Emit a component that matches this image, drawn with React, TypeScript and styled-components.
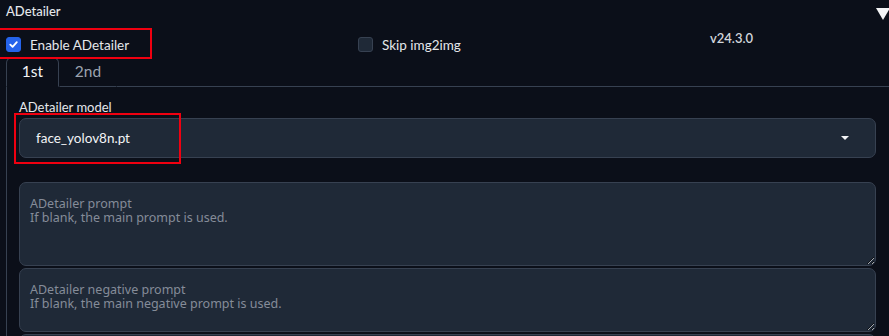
import React from "react";
import styled, { createGlobalStyle } from "styled-components";

const Global = createGlobalStyle`
  html, body { margin: 0; padding: 0; background: #0b0f19; }
  body { font-family: "Lato", "Noto Sans", sans-serif; color: #e5e7eb; overflow: hidden; }
  * { box-sizing: border-box; }
`;

const Page = styled.div`
  width: 1100px;
  padding: 0 0 0 6px;
`;

const Header = styled.div`
  position: relative;
  height: 28px;
  display: flex;
  align-items: flex-start;
  padding-top: 3px;
  width: 883px;
`;

const Title = styled.span`
  font-size: 13px;
  color: #e5e7eb;
  font-weight: 500;
`;

const Caret = styled.span`
  position: absolute;
  right: -1px;
  top: 8px;
  width: 0;
  height: 0;
  border-left: 7px solid transparent;
  border-right: 7px solid transparent;
  border-top: 12px solid #f3f4f6;
`;

const OptionsRow = styled.div`
  display: grid;
  grid-template-columns: 340px 340px 340px;
  column-gap: 12px;
  height: 29px;
  align-items: start;
`;

const CheckLabel = styled.label<{ $outlined?: boolean }>`
  position: relative;
  display: flex;
  align-items: center;
  gap: 9px;
  height: 15px;
  margin-top: 9px;
  font-size: 13.5px;
  color: #e5e7eb;
  ${(p) =>
    p.$outlined &&
    `&::after {
      content: "";
      position: absolute;
      left: -8px;
      top: -9px;
      width: 150px;
      height: 27px;
      border: 2px solid #f00010;
    }`}
`;

const Box = styled.span<{ $checked?: boolean }>`
  width: 15px;
  height: 15px;
  border-radius: 3px;
  display: inline-flex;
  align-items: center;
  justify-content: center;
  background: ${(p) => (p.$checked ? "#2563eb" : "#1f2937")};
  border: 1px solid ${(p) => (p.$checked ? "#2563eb" : "#374151")};
`;

const Version = styled.div`
  font-size: 13px;
  font-weight: 600;
  color: #d1d5db;
  margin-top: 2px;
`;

const TabNav = styled.div`
  display: flex;
  height: 30px;
  width: 883px;
`;

const Tab = styled.div<{ $active?: boolean }>`
  width: ${(p) => (p.$active ? "53px" : "58px")};
  display: flex;
  align-items: center;
  justify-content: center;
  font-size: 15.5px;
  color: ${(p) => (p.$active ? "#f3f4f6" : "#9ca3af")};
  border: 1px solid ${(p) => (p.$active ? "#374151" : "transparent")};
  border-bottom: 1px solid ${(p) => (p.$active ? "transparent" : "#374151")};
  border-radius: 6px 6px 0 0;
  padding-bottom: 2px;
`;

const NavRest = styled.div`
  flex: 1;
  border-bottom: 1px solid #374151;
`;

const Panel = styled.div`
  border-left: 1px solid #374151;
  padding: 11px 0 0 12px;
  display: flex;
  flex-direction: column;
  width: 870px;
`;

const FieldLabel = styled.div`
  font-size: 13px;
  color: #e5e7eb;
  height: 20px;
  line-height: 18px;
`;

const SelectWrap = styled.div`
  position: relative;
  height: 40px;
  background: #1f2937;
  border: 1px solid #374151;
  border-radius: 7px;
  display: flex;
  align-items: center;
  padding: 0 16px;
  justify-content: space-between;
  &::after {
    content: "";
    position: absolute;
    left: -6px;
    top: -6px;
    width: 163px;
    height: 47px;
    border: 2px solid #f00010;
  }
`;

const SelectValue = styled.span`
  font-size: 13.5px;
  color: #f3f4f6;
`;

const SelectArrow = styled.span`
  width: 0;
  height: 0;
  border-left: 4px solid transparent;
  border-right: 4px solid transparent;
  border-top: 4px solid #f3f4f6;
  margin-right: 10px;
`;

const Prompts = styled.div`
  margin-top: 24px;
  display: flex;
  flex-direction: column;
  gap: 2px;
`;

const Area = styled.textarea<{ $h: number }>`
  height: ${(p) => p.$h}px;
  background: #1f2937;
  border: 1px solid #374151;
  border-radius: 7px;
  padding: 14px 10px;
  font-family: "Noto Sans", sans-serif;
  font-size: 12.5px;
  line-height: 14px;
  color: #e5e7eb;
  resize: vertical;
  outline: none;
  &::placeholder {
    color: #858c99;
  }
`;

const Check = () => (
  <svg width="11" height="11" viewBox="0 0 12 12">
    <path d="M2.5 6.2 L5 8.5 L9.6 3.5" stroke="#fff" strokeWidth="2" fill="none" strokeLinecap="round" strokeLinejoin="round" />
  </svg>
);

export default function App() {
  return (
    <Page>
      <Global />
      <Header>
        <Title>ADetailer</Title>
        <Caret />
      </Header>
      <OptionsRow>
        <CheckLabel $outlined>
          <Box $checked>
            <Check />
          </Box>
          Enable ADetailer
        </CheckLabel>
        <CheckLabel>
          <Box />
          Skip img2img
        </CheckLabel>
        <Version>v24.3.0</Version>
      </OptionsRow>
      <TabNav>
        <Tab $active>1st</Tab>
        <Tab>2nd</Tab>
        <NavRest />
      </TabNav>
      <Panel>
        <FieldLabel>ADetailer model</FieldLabel>
        <SelectWrap>
          <SelectValue>face_yolov8n.pt</SelectValue>
          <SelectArrow />
        </SelectWrap>
        <Prompts>
          <Area $h={84} placeholder={"ADetailer prompt\nIf blank, the main prompt is used."} />
          <Area $h={64} placeholder={"ADetailer negative prompt\nIf blank, the main negative prompt is used."} />
          <Area $h={64} placeholder={""} />
        </Prompts>
      </Panel>
    </Page>
  );
}
